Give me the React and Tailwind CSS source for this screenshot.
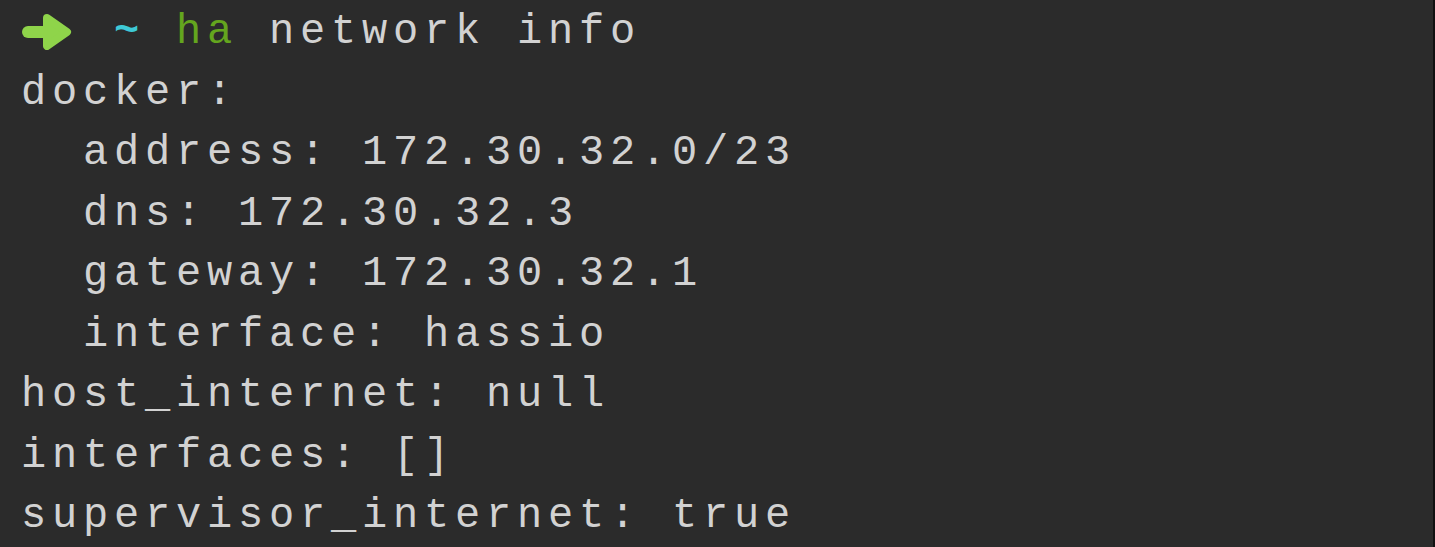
const lines = [
  "docker:",
  "  address: 172.30.32.0/23",
  "  dns: 172.30.32.3",
  "  gateway: 172.30.32.1",
  "  interface: hassio",
  "host_internet: null",
  "interfaces: []",
  "supervisor_internet: true",
];

const Arrow = () => (
  <svg width="50" height="36" viewBox="0 0 50 36" className="shrink-0">
    <path d="M6 18 H30" stroke="#8fd44a" strokeWidth="12" strokeLinecap="round" />
    <path
      d="M25 4 L45 18 L25 32 Z"
      fill="#8fd44a"
      stroke="#8fd44a"
      strokeWidth="8"
      strokeLinejoin="round"
    />
  </svg>
);

export default function App() {
  return (
    <div className="w-[1435px] h-[547px] bg-[#2b2b2b] border-r-2 border-[#111111] overflow-hidden">
      <div
        className="pl-[21px] pt-[2px] text-[42px] leading-[60.5px] tracking-[5.8px] text-[#d2d2d2] whitespace-pre"
        style={{ fontFamily: '"Liberation Mono", monospace' }}
      >
        <div className="flex items-center">
          <span className="w-[93px] flex items-center pl-[1px]">
            <Arrow />
          </span>
          <span className="text-[#3ec9d6] font-bold">~ </span>
          <span className="text-[#64a51e]">ha</span>
          <span> network info</span>
        </div>
        {lines.map((l, i) => (
          <div key={i}>{l}</div>
        ))}
      </div>
    </div>
  );
}
